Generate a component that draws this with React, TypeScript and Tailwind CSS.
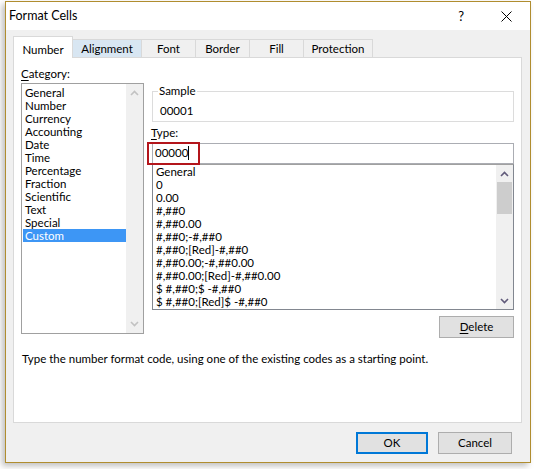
import React from 'react';

const categories = [
  'General', 'Number', 'Currency', 'Accounting', 'Date', 'Time',
  'Percentage', 'Fraction', 'Scientific', 'Text', 'Special', 'Custom',
];

const formats = [
  'General', '0', '0.00', '#,##0', '#,##0.00', '#,##0;-#,##0', '#,##0;[Red]-#,##0',
  '#,##0.00;-#,##0.00', '#,##0.00;[Red]-#,##0.00', '$ #,##0;$ -#,##0', '$ #,##0;[Red]$ -#,##0',
];

const tabs = [
  { label: 'Number', w: 'w-[60px]' },
  { label: 'Alignment', w: 'w-[69px]' },
  { label: 'Font', w: 'w-[54px]' },
  { label: 'Border', w: 'w-[54px]' },
  { label: 'Fill', w: 'w-[54px]' },
  { label: 'Protection', w: 'w-[69px]' },
];

const Chevron = ({ up, color }: { up?: boolean; color: string }) => (
  <svg width="9" height="6" viewBox="0 0 9 6">
    <polyline
      points={up ? '1,5 4.5,1.5 8,5' : '1,1 4.5,4.5 8,1'}
      fill="none"
      stroke={color}
      strokeWidth="1.6"
    />
  </svg>
);

const App = () => {
  return (
    <div className="w-[534px] h-[469px] bg-white overflow-hidden pt-px pl-[5px] font-['Lato',sans-serif] text-[11.5px] text-[#000]">
      {/* window */}
      <div className="w-[526px] h-[462px] border border-[#b08d2f] bg-[#f0f0f0] flex flex-col shadow-[-3px_3px_6px_rgba(0,0,0,0.25)]">
        {/* title bar */}
        <div className="h-[28px] bg-white flex items-center pl-[3px] shrink-0">
          <span className="text-[12.5px]">Format Cells</span>
          <span className="ml-auto mr-[37px] text-[13px] leading-none">?</span>
          <svg className="mr-[18px]" width="11" height="11" viewBox="0 0 11 11">
            <path d="M0.5 0.5 L10.5 10.5 M10.5 0.5 L0.5 10.5" stroke="#000" strokeWidth="1" />
          </svg>
        </div>

        <div className="flex-1 flex flex-col pl-[7px] pr-[8px] pt-[7px]">
          {/* tabs */}
          <div className="flex items-end h-[21px] relative z-10 -mb-px">
            {tabs.map((t, i) =>
              i === 0 ? (
                <div
                  key={t.label}
                  className={`${t.w} h-[22px] bg-white border border-b-0 border-[#d9d9d9] flex items-center justify-center pt-[4px]`}
                >
                  {t.label}
                </div>
              ) : (
                <div
                  key={t.label}
                  className={`${t.w} h-[19px] border border-l-0 border-[#d9d9d9] flex items-center justify-center pt-[1px] ${
                    i === 1 ? 'bg-[#d8e6f2]' : 'bg-[#f0f0f0]'
                  }`}
                >
                  {t.label}
                </div>
              )
            )}
          </div>

          {/* panel */}
          <div className="w-[509px] h-[366px] bg-white border border-[#d9d9d9] pt-[9px] pl-[7px]">
            <div className="flex">
              {/* left column */}
              <div className="w-[123px]">
                <div className="leading-[14px] h-[14px]">
                  <span className="underline underline-offset-2">C</span>ategory:
                </div>
                <div className="mt-[2px] h-[251px] border border-[#a0a0a0] flex">
                  <div className="flex-1 pt-[2px] pl-px">
                    {categories.map((c) => (
                      <div
                        key={c}
                        className={`h-[13px] leading-[13px] pl-[2px] ${
                          c === 'Custom' ? 'bg-[#3d96f5] text-white' : ''
                        }`}
                      >
                        {c}
                      </div>
                    ))}
                  </div>
                  <div className="w-[17px] bg-[#f0f0f0] flex flex-col items-center justify-between py-[6px]">
                    <Chevron up color="#c2c2c2" />
                    <Chevron color="#c2c2c2" />
                  </div>
                </div>
              </div>

              {/* right column */}
              <div className="ml-[8px] w-[362px]">
                <fieldset className="mt-[18px] h-[37px] border border-[#dcdcdc] pl-[5px]">
                  <legend className="px-px leading-[12px]">Sample</legend>
                  <div className="pl-[2px] pt-[7px] leading-[14px]">00001</div>
                </fieldset>

                <div className="mt-[4px] leading-[14px] h-[14px] -ml-px">
                  <span className="underline underline-offset-2">T</span>ype:
                </div>

                <div className="relative mt-[3px] h-[21px] border border-[#abadb3] flex items-center pl-[2px] pb-px">
                  <span>00000</span>
                  <span className="w-px h-[14px] bg-black" />
                  <div className="absolute -left-[6px] -top-[2px] w-[53px] h-[23px] border-2 border-[#b3151b]" />
                </div>

                <div className="h-[146px] border border-[#828790] border-t-[#a0a0a0] flex">
                  <div className="flex-1 pl-[3px]">
                    {formats.map((f) => (
                      <div key={f} className="h-[13px] leading-[13px]">
                        {f}
                      </div>
                    ))}
                  </div>
                  <div className="w-[17px] bg-[#f0f0f0] flex flex-col">
                    <div className="h-[17px] flex items-center justify-center">
                      <Chevron up color="#605a7a" />
                    </div>
                    <div className="h-[32px] mx-px bg-[#cdcdcd]" />
                    <div className="flex-1" />
                    <div className="h-[17px] flex items-center justify-center">
                      <Chevron color="#605a7a" />
                    </div>
                  </div>
                </div>

                <div className="flex justify-end mt-[6px]">
                  <button className="w-[75px] h-[22px] bg-[#e1e1e1] border border-[#adadad] leading-none">
                    <span className="underline underline-offset-2">D</span>elete
                  </button>
                </div>
              </div>
            </div>

            <p className="mt-[14px] leading-[14px] pl-px">
              Type the number format code, using one of the existing codes as a starting point.
            </p>
          </div>

          {/* buttons */}
          <div className="flex justify-end gap-[10px] mt-[9px] pr-[10px]">
            <button className="w-[72px] h-[22px] bg-[#e1e1e1] border-2 border-[#0078d7] leading-none">
              OK
            </button>
            <button className="w-[74px] h-[22px] bg-[#e1e1e1] border border-[#adadad] leading-none">
              Cancel
            </button>
          </div>
        </div>
      </div>
    </div>
  );
};

export default App;
